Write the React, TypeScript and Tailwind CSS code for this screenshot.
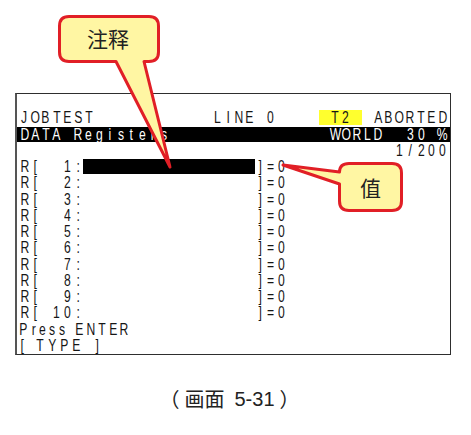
import React from "react";

type CellSpec = { ch: string; w: string; bg?: string };

const GRID = "w-[10.725px]";

function gridCells(text: string, bgs: { from: number; to: number; cls: string }[] = []): CellSpec[] {
  const padded = text.padEnd(40, " ");
  return padded.split("").map((ch, i) => {
    const b = bgs.find((r) => i >= r.from && i <= r.to);
    return { ch, w: GRID, bg: b ? b.cls : undefined };
  });
}

function Cell({ c }: { c: CellSpec }) {
  return (
    <span className={`flex shrink-0 justify-center h-[15px] ${c.w} ${c.bg ?? ""}`}>
      <span className="inline-block scale-x-[0.76] leading-[16px] whitespace-pre">
        {c.ch === " " ? "\u00a0" : c.ch}
      </span>
    </span>
  );
}

function Row({ cells, rowCls = "" }: { cells: CellSpec[]; rowCls?: string }) {
  return (
    <div className="h-[16.25px]">
      <div className={`flex h-[15px] pl-[2px] ${rowCls}`}>
        {cells.map((c, i) => (
          <Cell key={i} c={c} />
        ))}
      </div>
    </div>
  );
}

const pad3 = (n: number) => String(n).padStart(3, " ");

export default function App() {
  const rows: { cells: CellSpec[]; rowCls?: string }[] = [];
  rows.push({ cells: gridCells("") });
  rows.push({
    cells: gridCells("JOBTEST           LINE 0     T2  ABORTED", [
      { from: 28, to: 31, cls: "bg-[#ffff2e]" },
    ]),
  });
  rows.push({
    cells: gridCells("DATA Registers               WORLD  30 %"),
    rowCls: "bg-black text-white",
  });
  rows.push({ cells: gridCells("                                   1/200") });
  for (let n = 1; n <= 10; n++) {
    rows.push({
      cells: gridCells(
        `R[${pad3(n)}:                ]=0`,
        n === 1 ? [{ from: 6, to: 21, cls: "bg-black" }] : []
      ),
    });
  }
  rows.push({
    cells: [
      { ch: "P", w: "w-[9.5px]" },
      { ch: "r", w: "w-[9.5px]" },
      { ch: "e", w: "w-[9.5px]" },
      { ch: "s", w: "w-[9.5px]" },
      { ch: "s", w: "w-[9.5px]" },
      { ch: " ", w: "w-[7px]" },
      { ch: "E", w: "w-[11.5px]" },
      { ch: "N", w: "w-[11.5px]" },
      { ch: "T", w: "w-[11px]" },
      { ch: "E", w: "w-[11px]" },
      { ch: "R", w: "w-[11px]" },
    ],
  });
  rows.push({
    cells: [
      { ch: "[", w: "w-[6px]" },
      { ch: " ", w: "w-[9px]" },
      { ch: "T", w: "w-[12px]" },
      { ch: "Y", w: "w-[12px]" },
      { ch: "P", w: "w-[12px]" },
      { ch: "E", w: "w-[12px]" },
      { ch: " ", w: "w-[12px]" },
      { ch: "]", w: "w-[6px]" },
    ],
  });

  return (
    <div className="relative w-[471px] h-[435px] overflow-hidden bg-white">
      <div className="pt-[93px] pl-[15px]">
        <div className="w-[436px] border border-[#2e2e2e] border-l-2 border-l-[#555] bg-white font-['Liberation_Sans',Arial,sans-serif] text-[16px] text-[#161616]">
          {rows.map((r, i) => (
            <Row key={i} cells={r.cells} rowCls={r.rowCls} />
          ))}
        </div>
      </div>

      <div className="mt-[34px] flex justify-center pr-[12px]">
        <span className="flex items-center font-['Noto_Sans_CJK_SC',sans-serif] text-[20px] leading-[20px] text-[#222] [text-spacing-trim:space-all]">
          <span className="inline-block w-[20px] mr-[5px] text-right">（</span>
          <span>画面</span>
          <span className="ml-[10px] font-['Liberation_Sans',sans-serif]">5-31</span>
          <span className="inline-block w-[20px] ml-[5px] text-left">）</span>
        </span>
      </div>

      <svg
        className="absolute inset-0 pointer-events-none"
        width="471"
        height="435"
        viewBox="0 0 471 435"
      >
        <path
          d="M 69 16.5 H 149 Q 158.5 16.5 158.5 26 V 52 Q 158.5 61.5 149 61.5 H 144 L 170 167 L 116 61.5 H 69 Q 59.5 61.5 59.5 52 V 26 Q 59.5 16.5 69 16.5 Z"
          fill="#fff6a3"
          stroke="#e11f26"
          strokeWidth="3"
          strokeLinejoin="round"
        />
        <path
          d="M 349 163.5 H 392 Q 401.5 163.5 401.5 173 V 201 Q 401.5 210.5 392 210.5 H 349 Q 339.5 210.5 339.5 201 V 184 L 283 165 L 339.5 172 Q 339.5 163.5 349 163.5 Z"
          fill="#fff6a3"
          stroke="#e11f26"
          strokeWidth="3"
          strokeLinejoin="round"
        />
      </svg>

      <div className="absolute left-[58px] top-[15px] w-[100px] h-[46px] flex items-center justify-center font-['Noto_Sans_CJK_SC',sans-serif] text-[21px] leading-[21px] text-[#222]">
        注释
      </div>
      <div className="absolute left-[339px] top-[163px] w-[63px] h-[48px] flex items-center justify-center font-['Noto_Sans_CJK_SC',sans-serif] text-[21px] leading-[21px] text-[#222]">
        值
      </div>
    </div>
  );
}
